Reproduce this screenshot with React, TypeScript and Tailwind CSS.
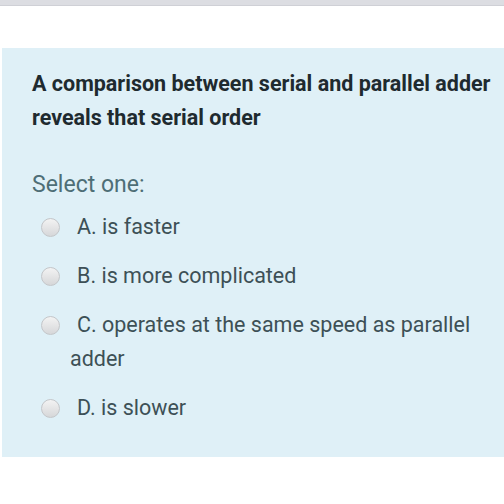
import React from "react";

const options = [
  "A. is faster",
  "B. is more complicated",
  "C. operates at the same speed as parallel adder",
  "D. is slower",
];

export default function App() {
  return (
    <div className="w-[504px] h-[504px] bg-white overflow-hidden" style={{ fontFamily: "Roboto, 'Noto Sans', sans-serif" }}>
      <div className="h-[6px] bg-[#dcdde2] border-b border-[#cfd0d6]" />
      <div className="h-[42px]" />
      <div className="ml-[2px] h-[409px] bg-[#dff0f7] pt-[19px] pl-[30px] pr-[4px]">
        <div className="text-[21.5px] font-bold leading-[34px] text-[#1e2a2f]">
          A comparison between serial and parallel adder reveals that serial order
        </div>
        <div className="mt-[33px] text-[23px] leading-[34px] text-[#4e6e76]">Select one:</div>
        <div className="mt-[8px] flex flex-col">
          {options.map((o, i) => (
            <div key={i} className="flex items-start pl-[9px] mb-[15px]">
              <div className="mt-[8px] w-[19px] h-[19px] rounded-full border border-[#c4c6c9] bg-gradient-to-b from-[#f3f3f3] to-[#d6d7d9] shrink-0" />
              <div className="ml-[10px] text-[21.5px] leading-[34px] text-[#3d5056] indent-[7px]">{o}</div>
            </div>
          ))}
        </div>
      </div>
    </div>
  );
}
